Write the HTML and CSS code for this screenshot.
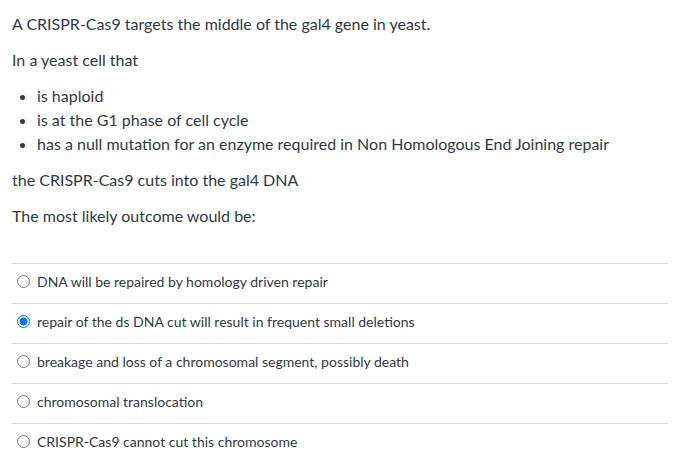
FILE: index.html
```html
<!DOCTYPE html>
<html>
<head>
<meta charset="utf-8">
<link rel="stylesheet" href="styles.css">
</head>
<body>
<div class="quiz">
  <div class="question">
    <p>A CRISPR-Cas9 targets the middle of the gal4 gene in yeast.</p>
    <p>In a yeast cell that</p>
    <ul>
      <li>is haploid</li>
      <li>is at the G1 phase of cell cycle</li>
      <li>has a null mutation for an enzyme required in Non Homologous End Joining repair</li>
    </ul>
    <p>the CRISPR-Cas9 cuts into the gal4 DNA</p>
    <p>The most likely outcome would be:</p>
  </div>
  <div class="answers">
    <label class="answer"><input type="radio" name="a"><span>DNA will be repaired by homology driven repair</span></label>
    <label class="answer"><input type="radio" name="a" checked><span>repair of the ds DNA cut will result in frequent small deletions</span></label>
    <label class="answer"><input type="radio" name="a"><span>breakage and loss of a chromosomal segment, possibly death</span></label>
    <label class="answer"><input type="radio" name="a"><span>chromosomal translocation</span></label>
    <label class="answer"><input type="radio" name="a"><span>CRISPR-Cas9 cannot cut this chromosome</span></label>
  </div>
</div>
</body>
</html>
```
FILE: styles.css
```css
html, body {
  margin: 0;
  padding: 0;
  background: #ffffff;
}
body {
  font-family: Lato, "Liberation Sans", sans-serif;
  color: #2d3b45;
}
.quiz {
  width: 656px;
  padding: 0 0 0 12px;
}
.question {
  font-size: 16px;
  line-height: 24px;
  padding-top: 12px;
}
.question p {
  margin: 0 0 12px 0;
}
.question ul {
  margin: 0 0 12px 0;
  padding-left: 25px;
}
.answers {
  margin-top: 35px;
}
.answer {
  display: flex;
  align-items: center;
  height: 35px;
  padding-bottom: 4px;
  border-top: 1px solid #dadcdd;
  font-size: 14px;
}
.answer input {
  margin: 0 7px 0 5px;
  width: 13px;
  height: 13px;
}
```
